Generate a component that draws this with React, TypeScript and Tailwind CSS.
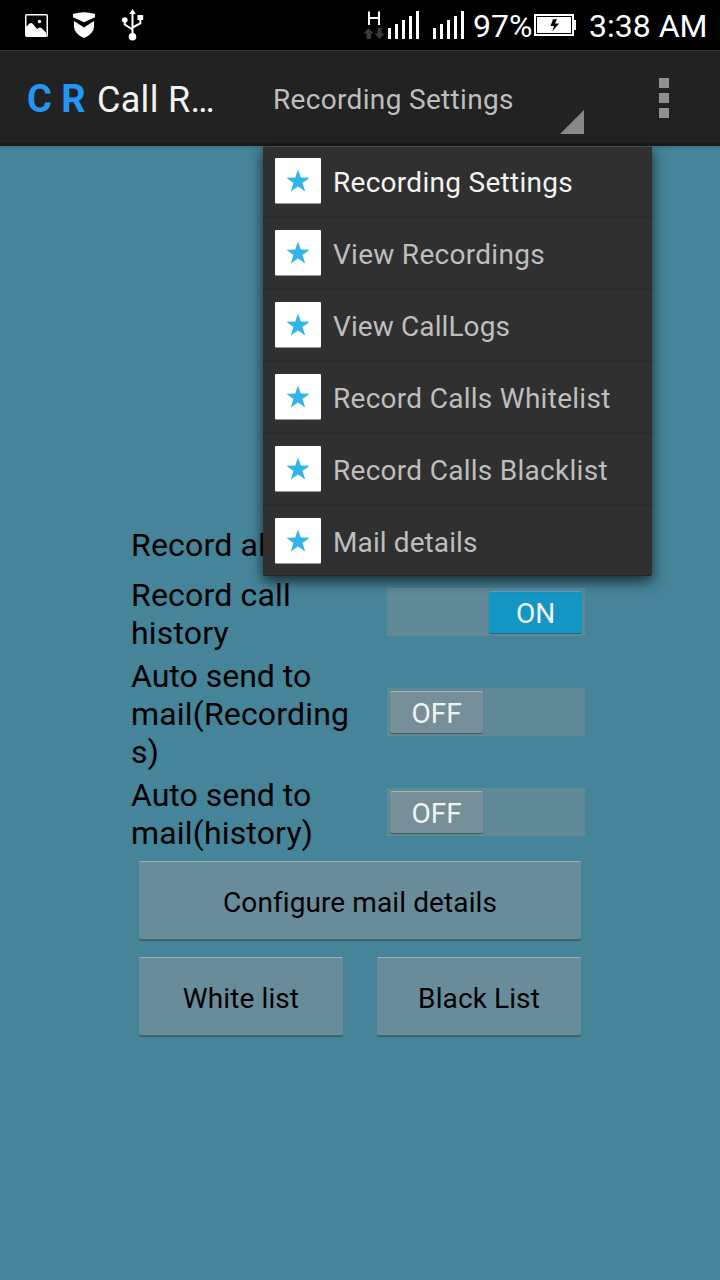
import { Fragment } from "react"
import clsx from "clsx"

const menuItems = [
  "Recording Settings",
  "View Recordings",
  "View CallLogs",
  "Record Calls Whitelist",
  "Record Calls Blacklist",
  "Mail details",
]

const settings = [
  { lines: ["Record all"], on: true },
  { lines: ["Record call", "history"], on: true },
  { lines: ["Auto send to", "mail(Recording", "s)"], on: false },
  { lines: ["Auto send to", "mail(history)"], on: false },
]

function SignalBars() {
  return (
    <svg width="32" height="28" viewBox="0 0 32 28" fill="#fff" shapeRendering="crispEdges">
      <rect x="0" y="17" width="3" height="11" />
      <rect x="7" y="13" width="3" height="15" />
      <rect x="14" y="9" width="3" height="19" />
      <rect x="21" y="5" width="3" height="23" />
      <rect x="28" y="0" width="3" height="28" />
    </svg>
  )
}

function StatusBar() {
  return (
    <div className="flex h-[50px] items-center bg-black text-white">
      <svg className="ml-[25px]" width="23" height="23" viewBox="0 0 23 23">
        <rect x="0.75" y="0.75" width="21.5" height="21.5" rx="1" fill="none" stroke="#fff" strokeWidth="1.5" />
        <path d="M1 13 L4 10 Q6 8 8 10 L12 15 L14.5 13.5 Q16 13 17.5 15 L21 18.5 V22 H1 Z" fill="#fff" />
        <circle cx="14.5" cy="7.5" r="1.7" fill="#fff" />
      </svg>
      <svg className="ml-[25px]" width="22" height="27" viewBox="0 0 22 27" fill="#fff">
        <path d="M0 2 Q11 -1.5 22 2 V5.2 L11 10.3 L0 5.2 Z" />
        <path d="M1 9 L11 15.6 L21 9 V15 Q20.5 22 11 26 Q1.5 22 1 15 Z" />
      </svg>
      <svg className="ml-[27px]" width="22" height="32" viewBox="0 0 22 32" fill="none" stroke="#fff" strokeWidth="2">
        <path d="M10.5 4 V27 M2.7 11 V15.5 L10.5 20.5 M18.3 9 V14.5 L10.5 18.5" />
        <path d="M10.5 0 L13.8 5 H7.2 Z" fill="#fff" stroke="none" />
        <circle cx="2.8" cy="11" r="2.8" fill="#fff" stroke="none" />
        <rect x="15.5" y="6" width="5.7" height="5" fill="#fff" stroke="none" />
        <circle cx="10.5" cy="27.7" r="3.8" fill="#fff" stroke="none" />
      </svg>
      <svg className="ml-[220px]" width="22" height="30" viewBox="0 0 22 30">
        <path d="M5 1.5 V15 M15 1.5 V15 M5 8 H15" fill="none" stroke="#fff" strokeWidth="2" />
        <path d="M4.5 18 L9.5 23.5 H7 V29 H2.5 V23.5 H-0.5 Z" fill="#3a3a3a" />
        <path d="M13.5 18 H17.5 V23.5 H20.5 L15.5 29 L10.5 23.5 H13.5 Z" fill="#3a3a3a" />
      </svg>
      <div className="ml-[2px] flex gap-[13px]">
        <SignalBars />
        <SignalBars />
      </div>
      <span className="ml-[8px] w-[61px] pt-[2px] text-[32px] leading-[38px] whitespace-nowrap">97%</span>
      <svg width="42" height="22" viewBox="0 0 42 22">
        <rect x="1" y="1" width="38" height="20" fill="none" stroke="#fff" strokeWidth="2" />
        <rect x="3" y="3" width="34" height="16" fill="#fff" />
        <rect x="39" y="6" width="3" height="10" fill="#fff" />
        <path d="M19 5.2 H23 L21 9.5 H25 L18.2 17.5 L20 12 H16.5 Z" fill="#000" />
      </svg>
      <span className="ml-[13px] pt-[2px] text-[32px] leading-[38px] whitespace-nowrap">3:38 AM</span>
    </div>
  )
}

function ActionBar() {
  return (
    <div className="flex h-24 items-center border-t border-b-[3px] border-t-[#333] border-b-[#1a1a1a] bg-[#222]">
      <span className="ml-[27px] w-[70px] pt-[4px] text-[38px] leading-none font-bold whitespace-nowrap text-[#2196f3]">
        C R
      </span>
      <span className="w-[166px] pt-[6px] text-[36px] leading-none tracking-[0.3px] whitespace-nowrap text-[#f3f3f3]">
        Call R…
      </span>
      <div className="flex h-full w-[321px] justify-between pl-[10px]">
        <span className="self-center pt-[6px] text-[28px] tracking-[0.33px] whitespace-nowrap text-[#bebebe]">
          Recording Settings
        </span>
        <svg className="mb-[9px] self-end" width="24" height="24" viewBox="0 0 24 24">
          <path d="M24 0 V24 H0 Z" fill="#888" />
        </svg>
      </div>
      <div className="ml-[75px] flex flex-col gap-[5px] pt-[2px]">
        <span className="size-[10px] bg-[#909090]" />
        <span className="size-[10px] bg-[#909090]" />
        <span className="size-[10px] bg-[#909090]" />
      </div>
    </div>
  )
}

function NavigationMenu() {
  return (
    <ul className="absolute top-[146px] left-[263px] h-[430px] w-[389px] rounded-b-[3px] bg-[#303030] shadow-[0_5px_14px_rgba(0,0,0,0.7),inset_0_1px_0_#4a4a4a,inset_0_-1px_0_#242424]">
      {menuItems.map((item, i) => (
        <li
          key={item}
          className={clsx(
            "flex h-[72px] items-center border-b-2 pl-3",
            i === menuItems.length - 1 ? "border-transparent" : "border-[#2b2b2b]",
          )}
        >
          <span className="mb-px flex h-[45px] w-[46px] items-center justify-center rounded-[1px] bg-white pt-px shadow-[0_1px_0_#999]">
            <svg width="24" height="24" viewBox="0 0 24 24" fill="#33b5e5">
              <path d="M12 0.5 L14.8 8.6 L23.6 8.8 L16.6 13.9 L19.2 22.5 L12 17.4 L4.8 22.5 L7.4 13.9 L0.4 8.8 L9.2 8.6 Z" />
            </svg>
          </span>
          <span
            className={clsx(
              "ml-3 pt-[4px] text-[28px] whitespace-nowrap",
              i === 0 ? "text-[#f3f3f3]" : "text-[#bebebe]",
              item === "View CallLogs" || item === "Mail details" ? "tracking-[0.1px]" : "tracking-[0.28px]",
            )}
          >
            {item}
          </span>
        </li>
      ))}
    </ul>
  )
}

function Toggle({ on }: { on: boolean }) {
  return (
    <div className={clsx("mb-1 flex h-12 w-[198px] bg-[#618a99] px-[3px] pt-[3px]", on && "justify-end")}>
      <span
        className={clsx(
          "flex h-[42px] w-[93px] items-center justify-center rounded-[2px] pt-[3px] text-[28px] leading-none text-[#f3f3f3]",
          on
            ? "bg-[#1496c4] shadow-[0_1px_1px_#24617a,inset_0_1px_0_#3fb0d6]"
            : "bg-[#768f98] shadow-[0_1px_1px_#43575f,inset_0_1px_0_#9ab3bb]",
        )}
      >
        {on ? "ON" : "OFF"}
      </span>
    </div>
  )
}

function Button({ label, className }: { label: string; className: string }) {
  return (
    <button
      className={clsx(
        "h-[79px] rounded-[2px] bg-[#688c9a] pt-[5px] text-[28px] tracking-[0.1px] text-black shadow-[0_1px_1px_#3c5963,inset_0_1px_0_#92b0bb,inset_0_-1px_0_#4b6873]",
        className,
      )}
    >
      {label}
    </button>
  )
}

export default function App() {
  return (
    <div className="relative h-[1280px] w-[720px] overflow-hidden bg-[#468499] font-['Roboto',sans-serif]">
      <StatusBar />
      <ActionBar />
      <div className="h-[5px] bg-linear-to-b from-black/15 to-transparent" />

      <main className="mt-[368px] ml-[131px] w-[454px]">
        <div className="flex flex-col gap-[5px]">
          {settings.map((setting) => (
            <div key={setting.lines.join(" ")} className="flex items-center justify-between">
              <p className="text-[32px] leading-[38px] tracking-[0.18px] whitespace-nowrap text-black">
                {setting.lines.map((line) => (
                  <Fragment key={line}>
                    <span className={clsx(line === "Auto send to" && "tracking-normal")}>{line}</span>
                    <br />
                  </Fragment>
                ))}
              </p>
              <Toggle on={setting.on} />
            </div>
          ))}
        </div>
        <div className="mt-[9px] ml-2 flex w-[442px] flex-wrap justify-between gap-y-[17px]">
          <Button label="Configure mail details" className="w-[442px]" />
          <Button label="White list" className="w-[204px]" />
          <Button label="Black List" className="w-[204px]" />
        </div>
      </main>

      <NavigationMenu />
    </div>
  )
}
